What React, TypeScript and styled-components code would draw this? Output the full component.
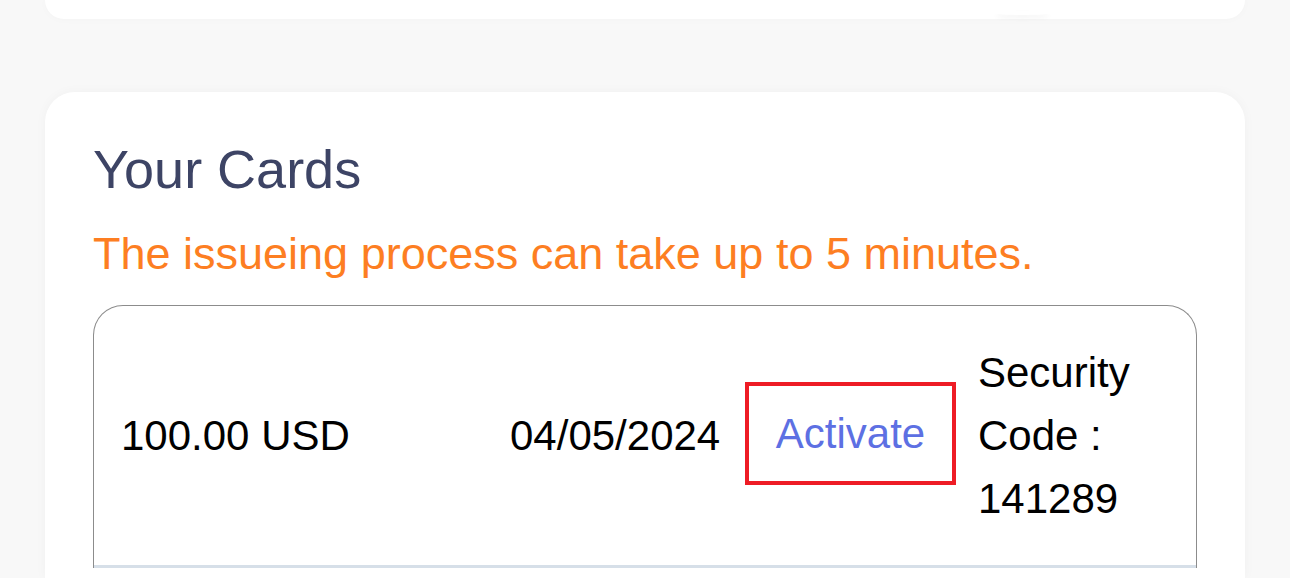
import React from "react";
import styled, { createGlobalStyle } from "styled-components";

const GlobalStyle = createGlobalStyle`
  html, body {
    margin: 0;
    padding: 0;
    background: #f8f8f8;
    font-family: "Liberation Sans", Arial, Helvetica, sans-serif;
  }
  * { box-sizing: border-box; }
`;

const Page = styled.div`
  width: 1290px;
  height: 578px;
  overflow: hidden;
  padding: 0 45px;
  display: flex;
  flex-direction: column;
  gap: 73px;
  background: #f8f8f8;
`;

const TopCard = styled.div`
  position: relative;
  height: 19px;
  background: #ffffff;
  border-radius: 0 0 30px 30px;
  box-shadow: 0 0 10px rgba(0, 0, 0, 0.025);
`;

const FaintButtonShadow = styled.div`
  position: absolute;
  left: 950px;
  bottom: 4px;
  width: 55px;
  height: 4px;
  border-radius: 50%;
  box-shadow: 0 3px 5px rgba(0, 0, 0, 0.05);
`;

const Card = styled.section`
  background: #ffffff;
  border-radius: 30px 30px 0 0;
  padding: 46px 48px 0;
  box-shadow: 0 0 12px rgba(0, 0, 0, 0.035);
  flex: 1;
`;

const Title = styled.h2`
  margin: 0;
  font-size: 54px;
  line-height: 63px;
  font-weight: 400;
  color: #3d4465;
`;

const Notice = styled.p`
  margin: 26px 0 0;
  font-size: 45px;
  line-height: 54px;
  color: #fd7e22;
`;

const Table = styled.div`
  margin-top: 24px;
  border: 1px solid #8c8c8c;
  border-bottom: none;
  border-radius: 30px 30px 0 0;
  overflow: hidden;
`;

const Row = styled.div`
  display: grid;
  grid-template-columns: 392px 259px 211px 1fr;
  align-items: center;
  border-bottom: 3px solid #d6dfe8;
  font-size: 42px;
  line-height: 63px;
  color: #000000;
`;

const Cell = styled.div<{ $pad?: string }>`
  padding: ${(p) => p.$pad ?? "35px 24px"};
  display: flex;
  align-items: center;
`;

const ActivateLink = styled.a`
  display: block;
  width: 211px;
  padding: 16px 0;
  text-align: center;
  border: 4px solid #ee1c25;
  color: #5d70e3;
  text-decoration: none;
  cursor: pointer;
  margin-top: -4px;
`;

const Security = styled.div`
  width: 196px;
`;

export default function App() {
  return (
    <>
      <GlobalStyle />
      <Page>
        <TopCard>
          <FaintButtonShadow />
        </TopCard>
        <Card>
          <Title>Your Cards</Title>
          <Notice>The issueing process can take up to 5 minutes.</Notice>
          <Table>
            <Row>
              <Cell $pad="35px 24px 35px 27px">100.00 USD</Cell>
              <Cell>04/05/2024</Cell>
              <Cell $pad="0">
                <ActivateLink>Activate</ActivateLink>
              </Cell>
              <Cell $pad="35px 0 35px 22px">
                <Security>Security Code : 141289</Security>
              </Cell>
            </Row>
          </Table>
        </Card>
      </Page>
    </>
  );
}
